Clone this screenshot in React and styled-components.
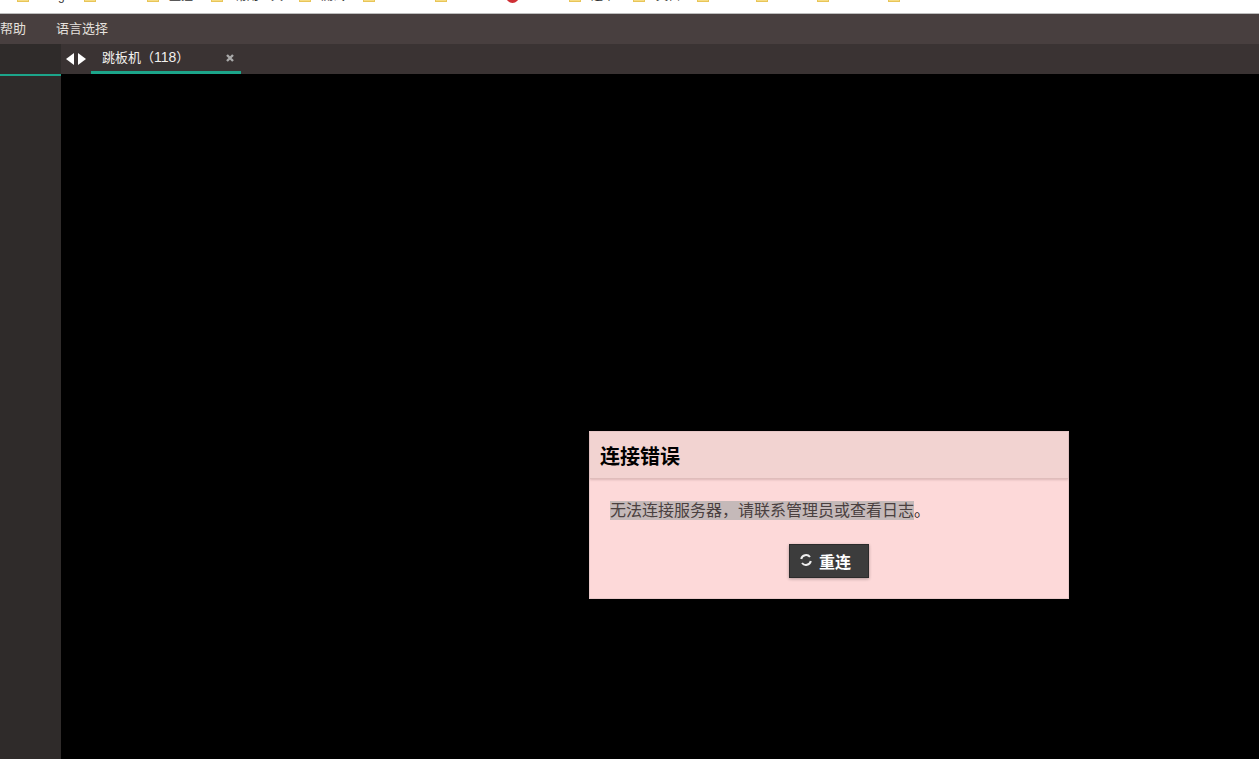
import React from "react";
import styled, { createGlobalStyle } from "styled-components";

const GlobalStyle = createGlobalStyle`
  html, body {
    margin: 0;
    padding: 0;
    height: 100%;
    overflow: hidden;
    background: #000;
    font-family: "Liberation Sans", "Noto Sans CJK SC", sans-serif;
  }
  #root {
    height: 100%;
  }
`;

const Page = styled.div`
  display: flex;
  flex-direction: column;
  width: 100%;
  height: 100%;
`;

const BookmarkBar = styled.div`
  display: flex;
  flex: none;
  height: 13px;
  padding-left: 17px;
  overflow: hidden;
  background: #fff;
  border-bottom: 1px solid #bdbdbd;
`;

const Bookmark = styled.div`
  display: flex;
  flex: none;
  align-items: flex-end;
  gap: ${(p) => p.$gap}px;
  width: ${(p) => p.$width}px;
  height: 14px;
  margin-top: -12px;
  font-size: 12px;
  line-height: 14px;
  white-space: nowrap;
  color: #333;
`;

const BookmarkLabel = styled.span`
  margin-bottom: -1px;
`;

const RedDot = styled.svg`
  margin-bottom: -1px;
`;

const Menu = styled.div`
  display: flex;
  flex: none;
  gap: 30px;
  align-items: center;
  box-sizing: border-box;
  height: 30px;
  padding-bottom: 3px;
  background: #483f3f;
  color: #e6e1de;
  font-size: 13px;
`;

const Body = styled.div`
  display: flex;
  flex: 1;
  min-height: 0;
`;

const Sidebar = styled.div`
  flex: none;
  width: 61px;
  background: #2f2b2a;
`;

const SidebarHead = styled.div`
  box-sizing: border-box;
  height: 32px;
  border-bottom: 2px solid #1ca58a;
`;

const Main = styled.div`
  position: relative;
  display: flex;
  flex: 1;
  flex-direction: column;
  min-width: 0;
`;

const TabBar = styled.div`
  display: flex;
  flex: none;
  height: 30px;
  background: #3a3333;
`;

const Arrows = styled.div`
  display: flex;
  flex: none;
  gap: 4px;
  align-items: center;
  width: 30px;
  padding-left: 5px;
  box-sizing: border-box;
`;

const Tab = styled.div`
  display: flex;
  box-sizing: border-box;
  align-items: center;
  justify-content: space-between;
  width: 150px;
  padding: 0 7px 2px 11px;
  border-bottom: 3px solid #1ca58a;
  color: #f2f0ee;
  font-size: 13px;
`;

const Count = styled.span`
  font-size: 14px;
`;

const CloseSvg = styled.svg`
  margin-top: 3px;
`;

const Terminal = styled.div`
  flex: 1;
  background: #000;
`;

const Dialog = styled.div`
  position: absolute;
  top: 387px;
  left: 528px;
  box-sizing: border-box;
  width: 480px;
  height: 168px;
  background: #fdd9d9;
  border: 1px solid #e9c9c9;
`;

const DialogHead = styled.div`
  display: flex;
  box-sizing: border-box;
  align-items: center;
  height: 47px;
  padding-left: 10px;
  background: #f2d3d1;
  border-bottom: 1px solid #dfbdbb;
  box-shadow: 0 1px 2px rgba(120, 80, 80, 0.25);
  color: #000;
  font-size: 20px;
  font-weight: bold;
`;

const DialogBody = styled.div`
  display: flex;
  flex-direction: column;
  padding: 22px 20px 0;
`;

const Message = styled.div`
  color: #1f1a1a;
  font-size: 16px;
  line-height: 19px;
`;

const Selected = styled.span`
  display: inline-block;
  background: #c5b9b9;
  color: #4a4040;
`;

const Actions = styled.div`
  display: flex;
  justify-content: center;
  margin-top: 24px;
`;

const Button = styled.button`
  display: flex;
  box-sizing: border-box;
  align-items: center;
  gap: 7px;
  width: 80px;
  height: 34px;
  padding: 0 0 0 10px;
  background: #3c3c3c;
  border: 1px solid #2b2b2b;
  box-shadow: 0 1px 3px rgba(0, 0, 0, 0.3);
  color: #fff;
  font-family: inherit;
  font-size: 16px;
  font-weight: bold;
`;

const ButtonIcon = styled.svg`
  margin-bottom: 3px;
`;

const Folder = () => (
  <svg width="12" height="12" viewBox="0 0 12 12">
    <rect x="0.5" y="0.5" width="11" height="11" fill="#f6dc83" stroke="#e8c558" />
  </svg>
);

const Dot = () => (
  <RedDot width="13" height="13" viewBox="0 0 13 13">
    <circle cx="6.5" cy="6.5" r="6.5" fill="#cf2f35" />
  </RedDot>
);

const LeftArrow = () => (
  <svg width="8" height="12" viewBox="0 0 8 12">
    <path d="M8 0V12L0 6Z" fill="#fff" />
  </svg>
);

const RightArrow = () => (
  <svg width="8" height="12" viewBox="0 0 8 12">
    <path d="M0 0V12L8 6Z" fill="#fff" />
  </svg>
);

const CloseIcon = () => (
  <CloseSvg width="8" height="8" viewBox="0 0 8 8">
    <path d="M1 1L7 7M7 1L1 7" stroke="#a9a9a9" strokeWidth="2.4" />
  </CloseSvg>
);

const RefreshIcon = () => (
  <ButtonIcon width="12" height="12" viewBox="0 0 12 12" fill="none">
    <path d="M1.2 5A5 5 0 0 1 10 3" stroke="#eee" strokeWidth="2" />
    <path d="M10.8 7A5 5 0 0 1 2 9" stroke="#eee" strokeWidth="2" />
  </ButtonIcon>
);

const bookmarks = [
  { width: 67, gap: 29, label: "g" },
  { width: 63, gap: 10, label: "" },
  { width: 64, gap: 10, label: "监控" },
  { width: 88, gap: 12, label: "常用工具" },
  { width: 64, gap: 10, label: "测试" },
  { width: 72, gap: 10, label: "" },
  { width: 134, gap: 59, label: "", dot: true },
  { width: 64, gap: 10, label: "运维" },
  { width: 64, gap: 11, label: "文档" },
  { width: 59, gap: 10, label: "" },
  { width: 61, gap: 10, label: "" },
  { width: 71, gap: 10, label: "" },
  { width: 20, gap: 4, label: "" },
];

export default function App() {
  return (
    <Page>
      <GlobalStyle />
      <BookmarkBar>
        {bookmarks.map((b, i) => (
          <Bookmark key={i} $width={b.width} $gap={b.gap}>
            <Folder />
            {b.dot && <Dot />}
            {b.label && <BookmarkLabel>{b.label}</BookmarkLabel>}
          </Bookmark>
        ))}
      </BookmarkBar>
      <Menu>
        <span>帮助</span>
        <span>语言选择</span>
      </Menu>
      <Body>
        <Sidebar>
          <SidebarHead />
        </Sidebar>
        <Main>
          <TabBar>
            <Arrows>
              <LeftArrow />
              <RightArrow />
            </Arrows>
            <Tab>
              <span>
                跳板机（<Count>118</Count>）
              </span>
              <CloseIcon />
            </Tab>
          </TabBar>
          <Terminal />
          <Dialog>
            <DialogHead>连接错误</DialogHead>
            <DialogBody>
              <Message>
                <Selected>无法连接服务器，请联系管理员或查看日志</Selected>。
              </Message>
              <Actions>
                <Button>
                  <RefreshIcon />
                  重连
                </Button>
              </Actions>
            </DialogBody>
          </Dialog>
        </Main>
      </Body>
    </Page>
  );
}
